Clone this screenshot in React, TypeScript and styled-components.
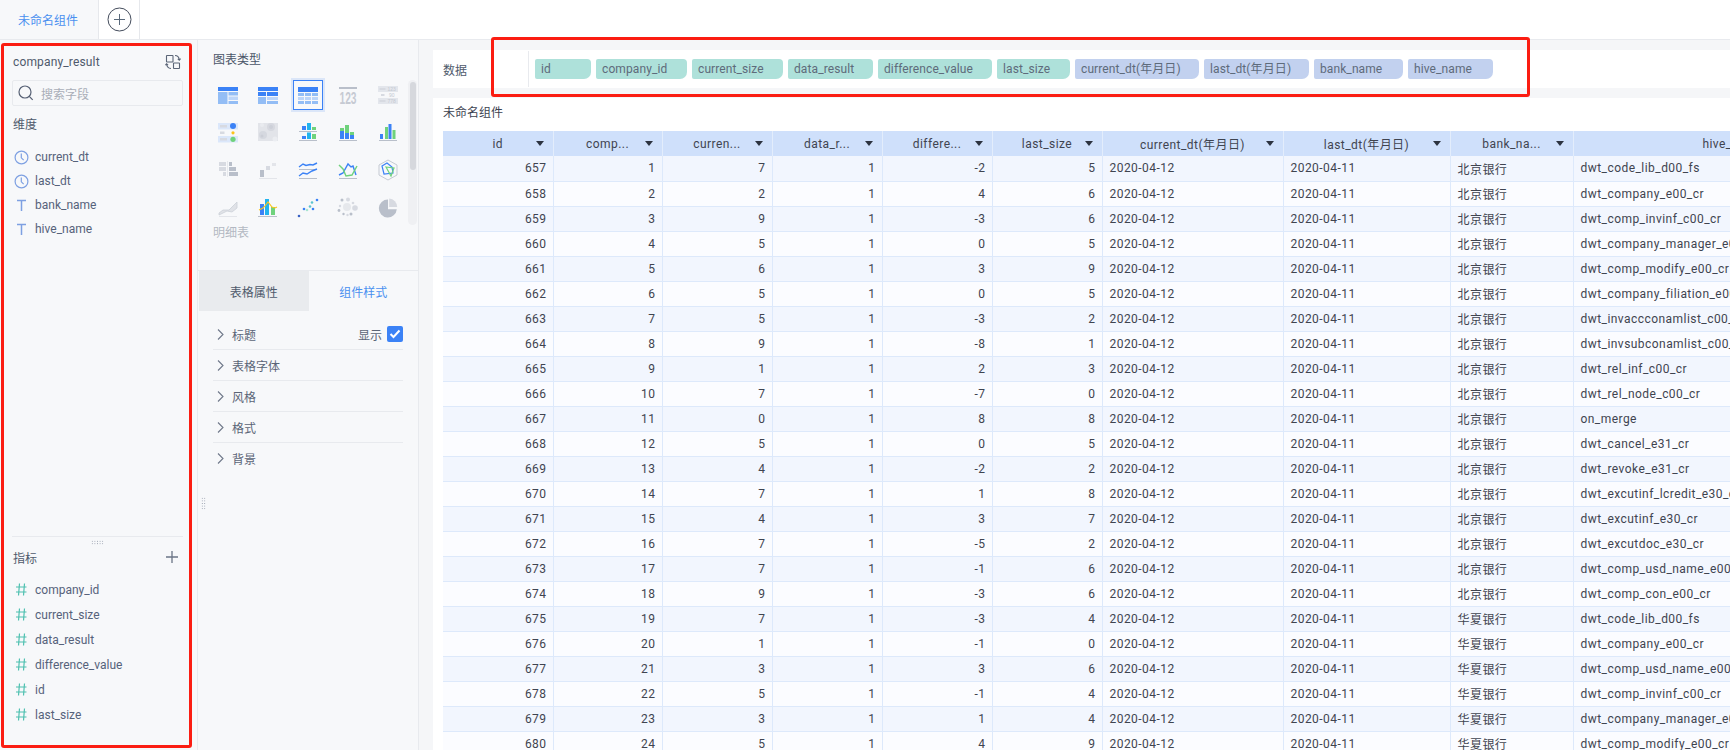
import React from 'react';
import styled, { createGlobalStyle } from 'styled-components';

const Global = createGlobalStyle`
  html, body { margin: 0; padding: 0; background: #fff; }
  body { font-family: Roboto, "Noto Sans CJK SC", sans-serif; font-size: 12px; color: #4a5568; }
  * { box-sizing: border-box; }
`;

const Page = styled.div`
  position: relative;
  width: 1730px;
  height: 750px;
  overflow: hidden;
  display: flex;
  flex-direction: column;
`;

const TopBar = styled.div`
  height: 40px;
  flex: none;
  display: flex;
  border-bottom: 1px solid #e8eaee;
  background: #fff;
`;
const ActiveTab = styled.div`
  width: 99px;
  padding-left: 18px;
  display: flex;
  align-items: center;
  color: #4a90f0;
  background: #f7f8fa;
  border-right: 1px solid #e6e8ec;
`;
const AddTab = styled.div`
  width: 41px;
  display: flex;
  align-items: center;
  justify-content: center;
  border-right: 1px solid #e6e8ec;
`;

const Body = styled.div`
  flex: 1;
  display: flex;
  min-height: 0;
`;

const FieldPanel = styled.aside`
  width: 198px;
  flex: none;
  background: #f7f8fa;
  border-right: 1px solid #e8eaee;
  padding: 12px 14px 0 12px;
  display: flex;
  flex-direction: column;
`;
const PanelHead = styled.div`
  height: 20px;
  padding: 0 2px 0 1px;
  display: flex;
  align-items: center;
  justify-content: space-between;
  color: #4f5a6c;
  letter-spacing: 0.15px;
`;
const SearchBox = styled.div`
  margin-top: 8px;
  height: 26px;
  border: 1px solid #e8eaee;
  border-radius: 2px;
  padding-left: 5px;
  display: flex;
  align-items: center;
  gap: 7px;
  color: #a9aeb8;
`;
const SectionLabel = styled.div`
  margin-top: 10px;
  height: 18px;
  line-height: 18px;
  padding-left: 1px;
  color: #4f5a6c;
`;
const FieldList = styled.div<{ $top: number }>`
  margin-top: ${p => p.$top}px;
`;
const FieldRow = styled.div<{ $h: number }>`
  height: ${p => p.$h}px;
  display: flex;
  align-items: center;
  color: #56627a;
`;
const FieldIcon = styled.span`
  width: 23px;
  flex: none;
  display: flex;
  align-items: center;
  padding-left: 2px;
`;
const Metrics = styled.div`
  margin-top: auto;
  height: 214px;
  border-top: 1px solid #e8eaee;
`;
const HDots = styled.div`
  width: 13px;
  height: 5px;
  margin: 3px auto 2px;
  background-image: radial-gradient(circle, #8b93a3 0.6px, transparent 0.7px);
  background-size: 2.6px 2.5px;
`;
const MetricHead = styled.div`
  height: 20px;
  padding: 0 4px 0 1px;
  display: flex;
  align-items: center;
  justify-content: space-between;
  color: #4f5a6c;
`;

const ChartPanel = styled.section`
  width: 221px;
  flex: none;
  background: #f7f8fa;
  border-right: 1px solid #e8eaee;
  display: flex;
  flex-direction: column;
  position: relative;
`;
const ChartTypes = styled.div`
  position: relative;
  height: 231px;
  padding: 12px 0 0 15px;
  border-bottom: 1px solid #e8eaee;
`;
const PanelTitle = styled.div`
  height: 16px;
  line-height: 16px;
  color: #4a5568;
  margin-bottom: 12px;
`;
const IconGrid = styled.div`
  display: grid;
  grid-template-columns: repeat(5, 30px);
  grid-auto-rows: 30px;
  column-gap: 10px;
  row-gap: 8px;
`;
const ChartCell = styled.div<{ $on?: boolean }>`
  width: 30px;
  height: 30px;
  ${p => p.$on ? 'border: 1px solid #3b82f6; outline: 1px solid #3b82f6; outline-offset: -1px; box-shadow: 0 0 0 2px #dbe6f8;' : ''}
  svg { display: block; width: 30px; height: 30px; margin: ${p => p.$on ? '-1px' : '0'}; }
`;
const GridCaption = styled.div`
  height: 18px;
  line-height: 18px;
  color: #b3b8c2;
`;
const ScrollTrack = styled.div`
  position: absolute;
  left: 210px;
  top: 40px;
  width: 9px;
  height: 145px;
  border-radius: 5px;
  background: #eff0f3;
`;
const ScrollThumb = styled.div`
  margin: 2px auto 0;
  width: 6px;
  height: 88px;
  border-radius: 3px;
  background: #d6d8dd;
`;
const TabRow = styled.div`
  height: 40px;
  margin-left: 1px;
  display: flex;
`;
const StyleTab = styled.div<{ $on?: boolean }>`
  width: 110px;
  display: flex;
  align-items: center;
  justify-content: center;
  background: ${p => (p.$on ? '#f7f8fa' : '#e9ebee')};
  color: ${p => (p.$on ? '#4a90f0' : '#4f5a6c')};
`;
const Accordion = styled.div`
  padding: 8px 15px 0;
`;
const AccRow = styled.div`
  height: 31px;
  display: flex;
  align-items: center;
  gap: 8px;
  padding-left: 4px;
  color: #5b6577;
  border-bottom: 1px solid #e8eaee;
  &:last-child { border-bottom: none; }
`;
const AccRight = styled.div`
  margin-left: auto;
  display: flex;
  align-items: center;
  gap: 5px;
  color: #5b6577;
`;
const CheckBox = styled.span`
  width: 16px;
  height: 16px;
  border-radius: 2px;
  background: #3b82f6;
  display: flex;
  align-items: center;
  justify-content: center;
`;
const VDots = styled.div`
  position: absolute;
  left: 3px;
  top: 457px;
  width: 5px;
  height: 13px;
  background-image: radial-gradient(circle, #8b93a3 0.6px, transparent 0.7px);
  background-size: 2.5px 2.6px;
`;

const Workspace = styled.main`
  flex: 1;
  min-width: 0;
  background: #f5f6f8;
  padding: 10px 0 0 14px;
  display: flex;
  flex-direction: column;
  gap: 10px;
`;
const DataBar = styled.div`
  height: 38px;
  flex: none;
  background: #fff;
  display: flex;
  align-items: center;
`;
const DataLabel = styled.div`
  width: 96px;
  height: 36px;
  padding-left: 10px;
  display: flex;
  align-items: center;
  color: #4f5a6c;
  border-right: 1px solid #e8eaee;
`;
const Chips = styled.div`
  margin-left: 6px;
  display: flex;
  gap: 5px;
`;
const Chip = styled.div<{ $w: number; $kind: 'm' | 'd' }>`
  width: ${p => p.$w}px;
  height: 20px;
  padding-left: 6px;
  line-height: 20px;
  white-space: nowrap;
  color: #5e6b7b;
  letter-spacing: 0.1px;
  border-radius: 2px 4px 7px 2px;
  background: ${p => (p.$kind === 'm' ? '#aee1da' : '#c2d1ef')};
`;
const Card = styled.div`
  flex: 1;
  min-height: 0;
  background: #fff;
  padding: 6px 0 0 10px;
  overflow: hidden;
`;
const CardTitle = styled.div`
  height: 18px;
  line-height: 18px;
  margin-bottom: 9px;
  color: #3c4250;
`;
const Table = styled.table`
  table-layout: fixed;
  border-collapse: collapse;
  width: 1450px;
  color: #3f4450;
  letter-spacing: 0.45px;
`;
const Th = styled.th`
  position: relative;
  height: 25px;
  padding: 0;
  background: #cfe0fb;
  border-right: 1px solid #e3edfc;
  font-weight: 400;
  text-align: center;
  color: #3f4450;
  white-space: nowrap;
  overflow: hidden;
`;
const SortArrow = styled.span`
  position: absolute;
  right: 9px;
  top: 10px;
  width: 0;
  height: 0;
  border-left: 4px solid transparent;
  border-right: 4px solid transparent;
  border-top: 5px solid #2c3340;
`;
const Tr = styled.tr<{ $odd: boolean }>`
  background: ${p => (p.$odd ? '#f2f6fe' : '#fbfcff')};
`;
const Td = styled.td<{ $num?: boolean }>`
  height: 25px;
  padding: 0 6px 0 7px;
  border-right: 1px solid #dde9fb;
  border-bottom: 1px solid #dde9fb;
  text-align: ${p => (p.$num ? 'right' : 'left')};
  white-space: nowrap;
  overflow: hidden;
`;

const RedBox = styled.div<{ $x: number; $y: number; $w: number; $h: number }>`
  position: absolute;
  left: ${p => p.$x}px;
  top: ${p => p.$y}px;
  width: ${p => p.$w}px;
  height: ${p => p.$h}px;
  border: 3px solid #fb1d12;
  border-radius: 3px;
  pointer-events: none;
`;

const Clock = () => (
  <svg width="15" height="15" viewBox="0 0 15 15" fill="none" stroke="#7ea0e2" strokeWidth="1.2">
    <circle cx="7.5" cy="7.5" r="6.4" />
    <path d="M7.3 3.6v4.2l2.4 2.4" />
  </svg>
);
const TIcon = () => (
  <svg width="15" height="15" viewBox="0 0 15 15" fill="none" stroke="#7ea0e2" strokeWidth="1.5">
    <path d="M3 2.5h9M7.5 2.5V13" />
  </svg>
);
const HashIcon = () => (
  <svg width="15" height="15" viewBox="0 0 15 15" fill="none" stroke="#4fc0b0" strokeWidth="1.2">
    <path d="M5.5 1.5L4.5 13.5M10.5 1.5L9.5 13.5M2 5h10.5M2 10h10.5" />
  </svg>
);
const SwapIcon = () => (
  <svg width="16" height="16" viewBox="0 0 16 16" fill="none" stroke="#5b6577" strokeWidth="1.1">
    <rect x="1.5" y="1.5" width="6.5" height="6.5" rx="0.5" />
    <rect x="8.5" y="9" width="6" height="5.5" rx="0.5" />
    <path d="M10 1.5c2.5 0 4 1.5 4.3 4.5M12.8 4.8l1.5 1.4 1.3-1.5M1.6 10c.2 2.6 1.8 4.3 4.4 4.5M.4 11.2L1.6 9.8l1.5 1.3" />
  </svg>
);
const SearchIcon = () => (
  <svg width="16" height="16" viewBox="0 0 16 16" fill="none" stroke="#566074" strokeWidth="1.2">
    <circle cx="7" cy="7" r="6" />
    <path d="M11.3 11.3l3.4 3.6" />
  </svg>
);
const PlusIcon = () => (
  <svg width="14" height="14" viewBox="0 0 14 14" stroke="#6b7486" strokeWidth="1.3">
    <path d="M7 1v12M1 7h12" />
  </svg>
);
const AddIcon = () => (
  <svg width="25" height="25" viewBox="0 0 25 25" fill="none">
    <circle cx="12.5" cy="12.5" r="11.5" stroke="#444c5c" strokeWidth="1" />
    <path d="M12.5 7v11M7 12.5h11" stroke="#5a6a7c" strokeWidth="1" />
  </svg>
);
const Chevron = () => (
  <svg width="7" height="11" viewBox="0 0 7 11" fill="none" stroke="#6f788a" strokeWidth="1.1">
    <path d="M1 .5l5 5-5 5" />
  </svg>
);
const Tick = () => (
  <svg width="12" height="10" viewBox="0 0 12 10" fill="none" stroke="#fff" strokeWidth="2">
    <path d="M1.5 5l3 3 6-6.5" />
  </svg>
);

const B = '#3b82f6', L = '#93bdf5', XL = '#bcd5f9', G = '#6fd27c', C = '#22b4ee', GR = '#b9bfca', GL = '#d7dae1';

const chartIcons: React.ReactNode[] = [
  <g key="0"><rect x="5" y="7" width="20" height="4" fill={B} /><rect x="5" y="12" width="9.5" height="12" fill={L} /><rect x="15.5" y="12" width="9.5" height="3.5" fill={L} /><rect x="15.5" y="16.5" width="9.5" height="3.5" fill={XL} /><rect x="15.5" y="21" width="9.5" height="3" fill={L} /></g>,
  <g key="1"><rect x="5" y="7" width="20" height="4" fill={B} /><rect x="5" y="12" width="8" height="4" fill={B} /><rect x="14" y="12" width="11" height="4" fill={B} /><rect x="5" y="17" width="8" height="7" fill={L} /><rect x="14" y="17" width="11" height="3" fill={XL} /><rect x="14" y="21" width="11" height="3" fill={L} /></g>,
  <g key="2"><rect x="5" y="7" width="20" height="5" fill={B} />{[13, 17, 21].map(y => [5, 12, 19].map(x => <rect key={`${x}${y}`} x={x} y={y} width="6" height="3" fill={y === 17 ? XL : L} />))}</g>,
  <g key="3"><rect x="6" y="7" width="18" height="2" fill={GR} /><text x="15" y="24" textAnchor="middle" fontSize="16" fontWeight="700" textLength="17" lengthAdjust="spacingAndGlyphs" fill="#c6cad3" fontFamily="Liberation Sans, sans-serif">123</text></g>,
  <g key="4" fontFamily="Liberation Sans, sans-serif" fontSize="5" fill="#c3c8d1"><rect x="5" y="6" width="20" height="6" fill="#e3e6ec" /><rect x="5" y="18" width="20" height="6" fill="#e3e6ec" /><rect x="6.5" y="8" width="6" height="2" fill={GL} /><rect x="8" y="14" width="3.5" height="2" fill={GL} /><rect x="6.5" y="20" width="6" height="2" fill={GL} /><text x="14.5" y="11">123</text><text x="16" y="17">90</text><text x="14.5" y="23">778</text></g>,
  <g key="5"><rect x="5" y="5" width="20" height="6.5" fill="#dbe7fa" /><rect x="5" y="18" width="20" height="6.5" fill="#dbe7fa" /><rect x="7" y="7" width="7" height="2.5" fill={GL} /><rect x="7" y="13.5" width="4.5" height="2.5" fill={GL} /><rect x="7" y="20" width="7" height="2.5" fill={GL} /><circle cx="20" cy="8" r="3" fill={B} /><circle cx="20" cy="14.8" r="1.6" fill="#fcc419" /><circle cx="20" cy="21.3" r="2.6" fill={G} /></g>,
  <g key="6"><rect x="5" y="5" width="20" height="18" fill="#e2e4e9" /><circle cx="10" cy="17" r="4" fill="#d5d8df" /><circle cx="18" cy="9" r="4" fill="#d6d8df" /><circle cx="18" cy="9" r="2" fill="#cdd0d8" /><circle cx="22" cy="21" r="2.5" fill="#ebedf1" /><circle cx="9" cy="7" r="2" fill="#e9ebef" /><circle cx="9" cy="18" r="1.5" fill="#cbced6" /></g>,
  <g key="7"><rect x="9" y="8" width="4" height="4" fill={B} /><rect x="14" y="5" width="4" height="7" fill={C} /><rect x="19" y="9" width="4" height="3" fill={G} /><rect x="6" y="13" width="18" height="1" fill={GR} /><rect x="9" y="18" width="4" height="3" fill={B} /><rect x="14" y="14.5" width="4" height="6.5" fill={C} /><rect x="19" y="16" width="4" height="5" fill={G} /><rect x="6" y="22" width="18" height="1" fill={GR} /></g>,
  <g key="8"><rect x="7" y="13" width="4" height="8" fill={B} /><rect x="7" y="10" width="4" height="3" fill={G} /><rect x="12" y="15" width="4" height="6" fill={B} /><rect x="12" y="7" width="4" height="8" fill={G} /><rect x="17" y="17" width="4" height="4" fill={B} /><rect x="17" y="14" width="4" height="3" fill={G} /><rect x="6" y="22" width="18" height="1" fill={GR} /></g>,
  <g key="9"><rect x="7" y="16" width="3" height="5" fill={B} /><rect x="12" y="9" width="3" height="12" fill={G} /><rect x="15.5" y="6" width="3" height="15" fill={B} /><rect x="19.5" y="12" width="3" height="9" fill={G} /><rect x="6" y="22" width="18" height="1" fill={GR} /></g>,
  <g key="10"><rect x="6" y="6" width="7" height="4" fill={GL} /><rect x="6" y="11" width="7" height="4" fill={GL} /><rect x="10" y="16" width="3" height="4" fill={GL} /><rect x="14" y="5" width="1" height="16" fill="#e6e8ec" /><rect x="16" y="6" width="3" height="4" fill={GR} /><rect x="16" y="11" width="7" height="4" fill={GR} /><rect x="16" y="16" width="9" height="4" fill={GR} /></g>,
  <g key="11"><rect x="7" y="14" width="4" height="7" fill={GR} /><rect x="13" y="10" width="4" height="4" fill={GL} /><rect x="19" y="7" width="4" height="3" fill="#e3e5ea" /><rect x="6" y="22" width="18" height="1" fill="#e3e5ea" /></g>,
  <g key="12" fill="none"><path d="M6 11l4-3 3 1.5 4-1 3 .5 4-2" stroke={B} strokeWidth="1.4" /><rect x="6" y="13" width="18" height="1" fill={GR} stroke="none" /><path d="M6 20l4-3 4 1 5-3 5-2" stroke={B} strokeWidth="1.4" /><rect x="6" y="22" width="18" height="1" fill={GR} stroke="none" /></g>,
  <g key="13" fill="none"><path d="M6 19l4-2 5-9 3 3 2-1 3 9" stroke={B} strokeWidth="1.4" /><path d="M6 9l4 4 3 7 6-1 5-9" stroke={G} strokeWidth="1.4" /><rect x="6" y="22" width="18" height="1" fill={GR} stroke="none" /></g>,
  <g key="14" fill="none"><path d="M15 4l9 5v10l-9 5-9-5V9z" stroke="#c5cad3" strokeWidth="1" /><path d="M9 10l5-3 5 4 1 6-9 1z" stroke={B} strokeWidth="1.2" /><path d="M13 11l8 1-3 8z" stroke={G} strokeWidth="1.2" /></g>,
  <g key="15" fill="none"><path d="M6 19l4-3 6 0 4-4 4-4v6l-5 4-5-1-8 4z" fill="#e0e2e7" stroke="#ccd0d8" strokeWidth="0.8" /><rect x="6" y="22" width="18" height="1" fill="#e3e5ea" stroke="none" /></g>,
  <g key="16"><rect x="7" y="10" width="4" height="11" fill={B} /><rect x="12" y="5" width="4" height="16" fill={C} /><rect x="18" y="13" width="4" height="8" fill={G} /><path d="M6 16l4-2 2-2 3-4 4 5 3 1 2-1" fill="none" stroke="#fcc419" strokeWidth="1.1" /><rect x="5" y="22" width="19" height="1" fill={GR} /></g>,
  <g key="17">{[[6, 22, '#3a62c4'], [11, 15, B], [14, 16, '#a9e5d0'], [17, 12.5, '#5cc4cf'], [19, 8.5, '#5cc4cf'], [20, 15, B], [24, 6, B]].map(([x, y, c]) => <circle key={`${x}-${y}`} cx={x as number} cy={y as number} r="1.3" fill={c as string} />)}</g>,
  <g key="18" fill={GL}><circle cx="14" cy="13" r="4" fill="#e6e8ec" /><circle cx="9" cy="6" r="1.5" fill={GR} /><circle cx="15" cy="5.5" r="2" /><circle cx="20" cy="9" r="1.3" /><circle cx="22" cy="14" r="2.8" /><circle cx="7" cy="12" r="1.2" /><circle cx="6" cy="16.5" r="1.4" fill={GR} /><circle cx="10.5" cy="20" r="1.2" fill={GR} /><circle cx="14.5" cy="21" r="1.2" /><circle cx="18" cy="20" r="1.5" fill={GR} /></g>,
  <g key="19"><path d="M15 5.5a9 9 0 1 0 8.8 9.8H15z" fill={GR} /><path d="M16.2 4.5a8.6 8.6 0 0 1 8 8.6h-8z" fill="#d7dae1" /></g>,
];

const accItems = ['标题', '表格字体', '风格', '格式', '背景'];
const dims = ['current_dt', 'last_dt', 'bank_name', 'hive_name'];
const metrics = ['company_id', 'current_size', 'data_result', 'difference_value', 'id', 'last_size'];
const chips: { t: string; w: number; k: 'm' | 'd' }[] = [
  { t: 'id', w: 56, k: 'm' }, { t: 'company_id', w: 91, k: 'm' }, { t: 'current_size', w: 91, k: 'm' },
  { t: 'data_result', w: 85, k: 'm' }, { t: 'difference_value', w: 114, k: 'm' }, { t: 'last_size', w: 73, k: 'm' },
  { t: 'current_dt(年月日)', w: 124, k: 'd' }, { t: 'last_dt(年月日)', w: 105, k: 'd' },
  { t: 'bank_name', w: 89, k: 'd' }, { t: 'hive_name', w: 85, k: 'd' },
];
const columns = [
  { t: 'id', w: 110 }, { t: 'comp...', w: 109 }, { t: 'curren...', w: 110 }, { t: 'data_r...', w: 110 }, { t: 'differe...', w: 110 },
  { t: 'last_size', w: 110 }, { t: 'current_dt(年月日)', w: 181 }, { t: 'last_dt(年月日)', w: 167 }, { t: 'bank_na...', w: 123 }, { t: 'hive_name', w: 320 },
];
const cur = [7, 2, 9, 5, 6, 5, 5, 9, 1, 7, 0, 5, 4, 7, 4, 7, 7, 9, 7, 1, 3, 5, 3, 5];
const diff = [-2, 4, -3, 0, 3, 0, -3, -8, 2, -7, 8, 0, -2, 1, 3, -5, -1, -3, -3, -1, 3, -1, 1, 4];
const last = [5, 6, 6, 5, 9, 5, 2, 1, 3, 0, 8, 5, 2, 8, 7, 2, 6, 6, 4, 0, 6, 4, 4, 9];
const hive = ['dwt_code_lib_d00_fs', 'dwt_company_e00_cr', 'dwt_comp_invinf_c00_cr', 'dwt_company_manager_e00_cr', 'dwt_comp_modify_e00_cr', 'dwt_company_filiation_e00_cr', 'dwt_invaccconamlist_c00_cr', 'dwt_invsubconamlist_c00_cr', 'dwt_rel_inf_c00_cr', 'dwt_rel_node_c00_cr', 'on_merge', 'dwt_cancel_e31_cr', 'dwt_revoke_e31_cr', 'dwt_excutinf_lcredit_e30_cr', 'dwt_excutinf_e30_cr', 'dwt_excutdoc_e30_cr', 'dwt_comp_usd_name_e00_cr', 'dwt_comp_con_e00_cr', 'dwt_code_lib_d00_fs', 'dwt_company_e00_cr', 'dwt_comp_usd_name_e00_cr', 'dwt_comp_invinf_c00_cr', 'dwt_company_manager_e00_cr', 'dwt_comp_modify_e00_cr'];

export default function App() {
  return (
    <Page>
      <Global />
      <TopBar>
        <ActiveTab>未命名组件</ActiveTab>
        <AddTab><AddIcon /></AddTab>
      </TopBar>
      <Body>
        <FieldPanel>
          <PanelHead>company_result<SwapIcon /></PanelHead>
          <SearchBox><SearchIcon />搜索字段</SearchBox>
          <SectionLabel>维度</SectionLabel>
          <FieldList $top={11}>
            {dims.map((d, i) => (
              <FieldRow key={d} $h={24}><FieldIcon>{i < 2 ? <Clock /> : <TIcon />}</FieldIcon>{d}</FieldRow>
            ))}
          </FieldList>
          <Metrics>
            <HDots />
            <MetricHead>指标<PlusIcon /></MetricHead>
            <FieldList $top={10}>
              {metrics.map(m => (
                <FieldRow key={m} $h={25}><FieldIcon><HashIcon /></FieldIcon>{m}</FieldRow>
              ))}
            </FieldList>
          </Metrics>
        </FieldPanel>
        <ChartPanel>
          <VDots />
          <ChartTypes>
            <PanelTitle>图表类型</PanelTitle>
            <IconGrid>
              {chartIcons.map((ic, i) => (
                <ChartCell key={i} $on={i === 2}><svg viewBox="0 0 30 30">{ic}</svg></ChartCell>
              ))}
            </IconGrid>
            <GridCaption>明细表</GridCaption>
            <ScrollTrack><ScrollThumb /></ScrollTrack>
          </ChartTypes>
          <TabRow>
            <StyleTab>表格属性</StyleTab>
            <StyleTab $on>组件样式</StyleTab>
          </TabRow>
          <Accordion>
            {accItems.map((a, i) => (
              <AccRow key={a}>
                <Chevron />{a}
                {i === 0 && <AccRight>显示<CheckBox><Tick /></CheckBox></AccRight>}
              </AccRow>
            ))}
          </Accordion>
        </ChartPanel>
        <Workspace>
          <DataBar>
            <DataLabel>数据</DataLabel>
            <Chips>
              {chips.map(c => <Chip key={c.t} $w={c.w} $kind={c.k}>{c.t}</Chip>)}
            </Chips>
          </DataBar>
          <Card>
            <CardTitle>未命名组件</CardTitle>
            <Table>
              <colgroup>{columns.map(c => <col key={c.t} width={c.w} />)}</colgroup>
              <thead>
                <tr>
                  {columns.map(c => <Th key={c.t}>{c.t}<SortArrow /></Th>)}
                </tr>
              </thead>
              <tbody>
                {hive.map((h, i) => (
                  <Tr key={i} $odd={i % 2 === 0}>
                    <Td $num>{657 + i}</Td>
                    <Td $num>{i + 1}</Td>
                    <Td $num>{cur[i]}</Td>
                    <Td $num>1</Td>
                    <Td $num>{diff[i]}</Td>
                    <Td $num>{last[i]}</Td>
                    <Td>2020-04-12</Td>
                    <Td>2020-04-11</Td>
                    <Td>{i < 18 ? '北京银行' : '华夏银行'}</Td>
                    <Td>{h}</Td>
                  </Tr>
                ))}
              </tbody>
            </Table>
          </Card>
        </Workspace>
      </Body>
      <RedBox $x={1} $y={43} $w={191} $h={705} />
      <RedBox $x={491} $y={37} $w={1039} $h={60} />
    </Page>
  );
}
